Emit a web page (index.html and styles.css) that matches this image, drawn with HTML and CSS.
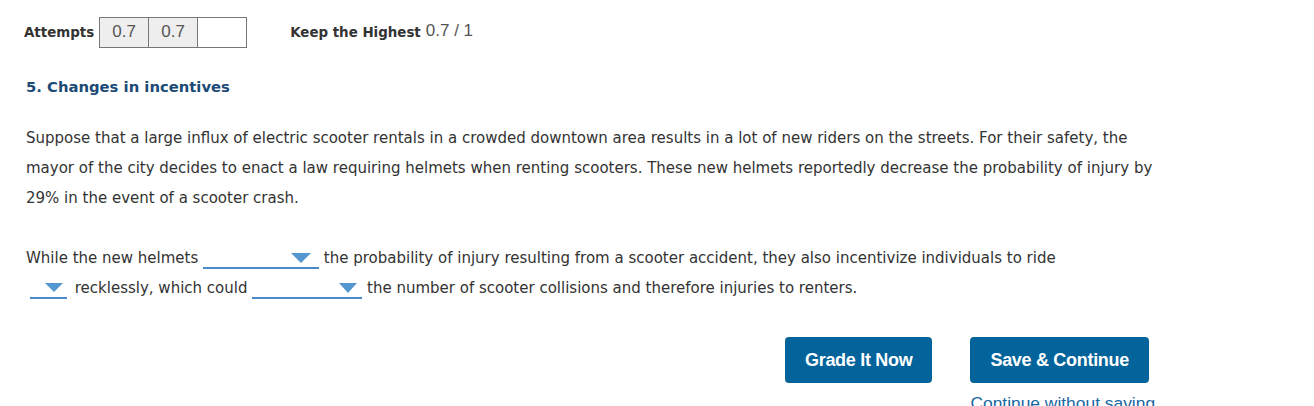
FILE: index.html
```html
<!DOCTYPE html>
<html>
<head>
<meta charset="utf-8">
<link rel="stylesheet" href="styles.css">
</head>
<body>
<div class="page">
  <div class="attempts">
    <span class="label">Attempts</span>
    <div class="boxes">
      <span class="box filled">0.7</span>
      <span class="box filled">0.7</span>
      <span class="box"></span>
    </div>
    <span class="label keep">Keep the Highest</span>
    <span class="score">0.7 / 1</span>
  </div>

  <h2 class="title">5. Changes in incentives</h2>

  <p class="para">Suppose that a large influx of electric scooter rentals in a crowded downtown area results in a lot of new riders on the streets. For their safety, the mayor of the city decides to enact a law requiring helmets when renting scooters. These new helmets reportedly decrease the probability of injury by 29% in the event of a scooter crash.</p>

  <p class="para sentence">While the new helmets <span class="dd dd-wide"><span class="arrow"></span></span> the probability of injury resulting from a scooter accident, they also incentivize individuals to ride <span class="dd dd-small"><span class="arrow"></span></span> recklessly, which could <span class="dd dd-mid"><span class="arrow"></span></span> the number of scooter collisions and therefore injuries to renters.</p>

  <div class="actions">
    <button class="btn">Grade It Now</button>
    <div class="save-col">
      <button class="btn">Save &amp; Continue</button>
      <a class="skip" href="#">Continue without saving</a>
    </div>
  </div>
</div>
</body>
</html>
```

FILE: styles.css
```css
html, body {
  margin: 0;
  padding: 0;
  background: #fff;
}
body {
  font-family: "DejaVu Sans", Verdana, sans-serif;
  color: #333;
  overflow: hidden;
}
.page {
  padding: 17px 0 0 24px;
  width: 1160px;
}
.attempts {
  display: flex;
  align-items: center;
  height: 31px;
}
.label {
  font-weight: bold;
  font-size: 13.4px;
  color: #333;
}
.boxes {
  display: flex;
  margin-left: 5px;
}
.box {
  width: 48px;
  height: 27px;
  border: 1px solid #777;
  margin-left: -1px;
  font-family: "Liberation Sans", Arial, sans-serif;
  font-size: 17px;
  color: #555;
  display: flex;
  align-items: center;
  justify-content: center;
  padding-bottom: 2px;
}
.box:first-child { margin-left: 0; }
.box.filled { background: #eee; }
.keep { margin-left: 43px; }
.score {
  font-family: "Liberation Sans", Arial, sans-serif;
  font-size: 17px;
  color: #555;
  margin-left: 5px;
  padding-bottom: 3px;
}
.title {
  margin: 29px 0 0 2px;
  font-size: 14.8px;
  font-weight: bold;
  color: #1b4a76;
  line-height: 20px;
}
.para {
  margin: 26px 0 0 2px;
  font-size: 15px;
  line-height: 30px;
  color: #333;
  width: 1145px;
}
.sentence {
  margin-top: 30px;
  width: 1050px;
}
.dd {
  display: inline-block;
  position: relative;
  height: 20px;
  border-bottom: 2px solid #4a8ac6;
  vertical-align: -6px;
}
.dd-wide { width: 116px; }
.dd-small { width: 37px; margin-left: 4px; margin-right: 3px; }
.dd-mid { width: 110px; }
.arrow {
  position: absolute;
  right: 8px;
  top: 6px;
  width: 0;
  height: 0;
  border-left: 10px solid transparent;
  border-right: 10px solid transparent;
  border-top: 10px solid #5597d0;
}
.dd-small .arrow { right: 4px; border-left-width: 9px; border-right-width: 9px; border-top-width: 9px; }
.dd-mid .arrow { right: 5px; border-left-width: 9px; border-right-width: 9px; }
.actions {
  display: flex;
  align-items: flex-start;
  gap: 38px;
  margin: 34px 0 0 761px;
}
.save-col {
  display: flex;
  flex-direction: column;
  align-items: flex-start;
}
.btn {
  height: 46px;
  padding: 0 20px;
  border: none;
  border-radius: 4px;
  background: #03639b;
  color: #fff;
  font-family: "Liberation Sans", Arial, sans-serif;
  font-weight: bold;
  font-size: 18px;
  letter-spacing: -0.3px;
  cursor: pointer;
}
.skip {
  margin-top: 10px;
  font-family: "Liberation Sans", Arial, sans-serif;
  font-size: 17.4px;
  color: #1767a3;
  text-decoration: none;
}
```
